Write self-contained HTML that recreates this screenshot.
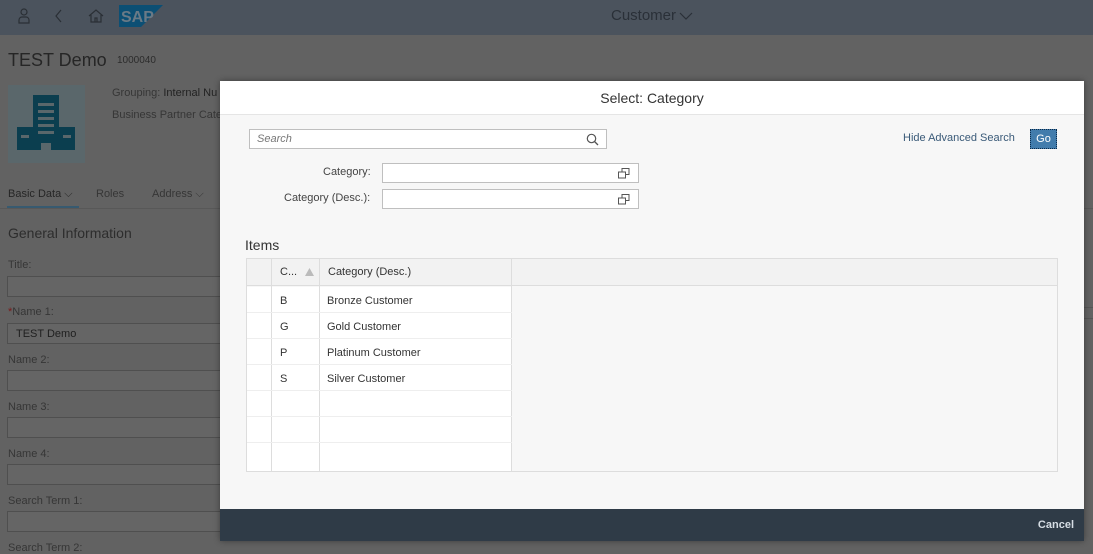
<!DOCTYPE html>
<html><head><meta charset="utf-8">
<style>
*{box-sizing:border-box;margin:0;padding:0}
body{width:1093px;height:548px;overflow:hidden;background:#626262;font-family:"Liberation Sans",Arial,sans-serif;position:relative;font-size:12px}
.abs{position:absolute}
.hdr{left:0;top:0;width:1093px;height:35px;background:#4b535d}
.dim{color:#2c2c2c}
.lbl{color:#363636;font-size:11px}
.inp{border:1px solid #4f4f4f;background:#656565;height:21px;left:7px;width:220px}
.dlg{left:220px;top:81px;width:864px;height:460px;background:#f7f7f7;box-shadow:0 0 6px rgba(0,0,0,.4)}
.dh{left:0;top:0;width:864px;height:34px;background:#fff;border-bottom:1px solid #e5e5e5;text-align:center;line-height:34px;font-size:14px;color:#333}
.field{background:#fff;border:1px solid #bfbfbf;height:20px}
.ft{left:0;top:428px;width:864px;height:32px;background:#2f3b47}
.tbl{left:26px;top:177px;width:812px;height:214px;border:1px solid #ddd;background:#f7f7f7}
.cell{position:absolute;font-size:11px;color:#333}
</style></head><body>
<div class="abs hdr"></div>
<svg class="abs" style="left:16px;top:6px" width="90" height="22" viewBox="0 0 90 22">
<g fill="none" stroke="#2a2f35" stroke-width="1.2">
<circle cx="8" cy="6" r="3"/><path d="M3 17h10v-3a3 3 0 0 0-3-3H6a3 3 0 0 0-3 3z"/>
<path d="M45 4l-5 6 5 6"/>
<path d="M73 10l7-6 7 6M75 9v7h10V9M79 16v-4h2v4"/>
</g></svg>
<svg class="abs" style="left:119px;top:5px" width="44" height="22" viewBox="0 0 44 22"><path d="M0 0h44L22 22H0z" fill="#0c4f74"/><text x="2" y="17" font-family="Liberation Sans" font-weight="bold" font-size="16" fill="#6a7a86">SAP</text></svg>
<div class="abs dim" style="left:611px;top:7px;font-size:15px;color:#2a3038">Customer</div>
<svg class="abs" style="left:679px;top:11px" width="14" height="10"><path d="M1 2l6 6 6-6" fill="none" stroke="#2a3038" stroke-width="1.2"/></svg>
<div class="abs dim" style="left:8px;top:50px;font-size:18px;color:#262626">TEST Demo</div>
<div class="abs dim" style="left:117px;top:55px;font-size:10px">1000040</div>
<div class="abs" style="left:8px;top:85px;width:77px;height:78px;background:#5a676b"></div>
<svg class="abs" style="left:16px;top:95px" width="60" height="60" viewBox="0 0 60 60"><g fill="#0b3e4f"><rect x="17" y="0" width="26" height="55"/><rect x="1" y="32" width="16" height="23"/><rect x="43" y="32" width="16" height="23"/></g><g fill="#5a676b"><rect x="22" y="8" width="16" height="3"/><rect x="22" y="15" width="16" height="3"/><rect x="22" y="22" width="16" height="3"/><rect x="22" y="29" width="16" height="3"/><rect x="22" y="36" width="16" height="3"/><rect x="5" y="40" width="8" height="3"/><rect x="47" y="40" width="8" height="3"/><rect x="25" y="48" width="10" height="7"/></g></svg>
<div class="abs lbl" style="left:112px;top:87px">Grouping: <span style="color:#222">Internal Nu</span></div>
<div class="abs lbl" style="left:112px;top:109px">Business Partner Cate</div>
<div class="abs lbl" style="left:8px;top:188px;font-size:11px;color:#262626">Basic Data ⌵</div>
<div class="abs" style="left:7px;top:206px;width:72px;height:2px;background:#375a70"></div>
<div class="abs lbl" style="left:96px;top:188px;font-size:11px">Roles</div>
<div class="abs lbl" style="left:152px;top:188px;font-size:11px">Address ⌵</div>
<div class="abs" style="left:0;top:208px;width:1093px;height:1px;background:#585858"></div>
<div class="abs" style="left:8px;top:225px;font-size:14px;color:#2d2d2d">General Information</div>
<div class="abs lbl" style="top:259px;left:8px">Title:</div><div class="abs inp" style="top:276px"></div>
<div class="abs lbl" style="top:306px;left:8px"><span style="color:#7a1a1a">*</span>Name 1:</div><div class="abs inp" style="top:323px"><span style="position:absolute;left:8px;top:4px;color:#1f1f1f;font-size:11px">TEST Demo</span></div>
<div class="abs lbl" style="top:354px;left:8px">Name 2:</div><div class="abs inp" style="top:370px"></div>
<div class="abs lbl" style="top:401px;left:8px">Name 3:</div><div class="abs inp" style="top:417px"></div>
<div class="abs lbl" style="top:448px;left:8px">Name 4:</div><div class="abs inp" style="top:464px"></div>
<div class="abs lbl" style="top:495px;left:8px">Search Term 1:</div><div class="abs inp" style="top:511px"></div>
<div class="abs lbl" style="top:542px;left:8px">Search Term 2:</div>
<div class="abs" style="left:1084px;top:307px;width:9px;height:1px;background:#555"></div>
<div class="abs" style="left:1084px;top:318px;width:9px;height:1px;background:#555"></div>

<div class="abs dlg">
<div class="abs dh">Select: Category</div>
<div class="abs field" style="left:29px;top:48px;width:358px;"><span style="position:absolute;left:7px;top:3px;font-style:italic;color:#777;font-size:11px">Search</span>
<svg style="position:absolute;right:7px;top:3px" width="13" height="13"><circle cx="5.5" cy="5.5" r="4.2" fill="none" stroke="#555" stroke-width="1.2"/><path d="M8.5 8.5l3.5 3.5" stroke="#555" stroke-width="1.3"/></svg></div>
<div class="abs" style="left:683px;top:51px;color:#3a5a78;font-size:11px">Hide Advanced Search</div>
<div class="abs" style="left:810px;top:48px;width:27px;height:20px;background:#427cac;border:1px dotted #0a2a4a;color:#fff;font-size:11px;text-align:center;line-height:18px">Go</div>
<div class="abs" style="left:103px;top:85px;color:#444;font-size:11px">Category:</div>
<div class="abs field" style="left:162px;top:82px;width:257px"><svg style="position:absolute;right:8px;top:4px" width="12" height="11"><rect x="4" y="0.5" width="7" height="6" fill="none" stroke="#555"/><rect x="0.5" y="4" width="7" height="6" fill="#fff" stroke="#555"/></svg></div>
<div class="abs" style="left:64px;top:111px;color:#444;font-size:11px">Category (Desc.):</div>
<div class="abs field" style="left:162px;top:108px;width:257px"><svg style="position:absolute;right:8px;top:4px" width="12" height="11"><rect x="4" y="0.5" width="7" height="6" fill="none" stroke="#555"/><rect x="0.5" y="4" width="7" height="6" fill="#fff" stroke="#555"/></svg></div>
<div class="abs" style="left:25px;top:156px;font-size:14px;color:#333">Items</div>
<div class="abs tbl">
 <div class="abs" style="left:0;top:0;width:810px;height:27px;background:#f2f2f2;border-bottom:1px solid #ddd"></div>
 <div class="abs" style="left:0;top:28px;width:265px;height:184px;background:#fff"></div>
 <div class="abs" style="left:24px;top:0;width:1px;height:212px;background:#ddd"></div>
 <div class="abs" style="left:72px;top:0;width:1px;height:212px;background:#ddd"></div>
 <div class="abs" style="left:264px;top:0;width:1px;height:212px;background:#ddd"></div>
 <div class="abs" style="left:0;top:53px;width:265px;height:1px;background:#eee"></div>
 <div class="abs" style="left:0;top:79px;width:265px;height:1px;background:#eee"></div>
 <div class="abs" style="left:0;top:105px;width:265px;height:1px;background:#eee"></div>
 <div class="abs" style="left:0;top:131px;width:265px;height:1px;background:#eee"></div>
 <div class="abs" style="left:0;top:157px;width:265px;height:1px;background:#eee"></div>
 <div class="abs" style="left:0;top:183px;width:265px;height:1px;background:#eee"></div>
 <div class="cell" style="left:33px;top:7px">C...</div>
 <svg class="abs" style="left:58px;top:9px" width="9" height="9"><path d="M4.5 0L9 8H0z" fill="#bbb"/></svg>
 <div class="cell" style="left:81px;top:7px">Category (Desc.)</div>
 <div class="cell" style="left:33px;top:36px">B</div><div class="cell" style="left:80px;top:36px">Bronze Customer</div>
 <div class="cell" style="left:33px;top:62px">G</div><div class="cell" style="left:80px;top:62px">Gold Customer</div>
 <div class="cell" style="left:33px;top:88px">P</div><div class="cell" style="left:80px;top:88px">Platinum Customer</div>
 <div class="cell" style="left:33px;top:114px">S</div><div class="cell" style="left:80px;top:114px">Silver Customer</div>
</div>
<div class="abs" style="left:0;top:428px;width:864px;height:1px;background:#3d6a8a"></div>
<div class="abs ft"><div class="abs" style="right:10px;top:10px;color:#d6dde4;font-weight:bold;font-size:11px">Cancel</div></div>
</div>
</body></html>
